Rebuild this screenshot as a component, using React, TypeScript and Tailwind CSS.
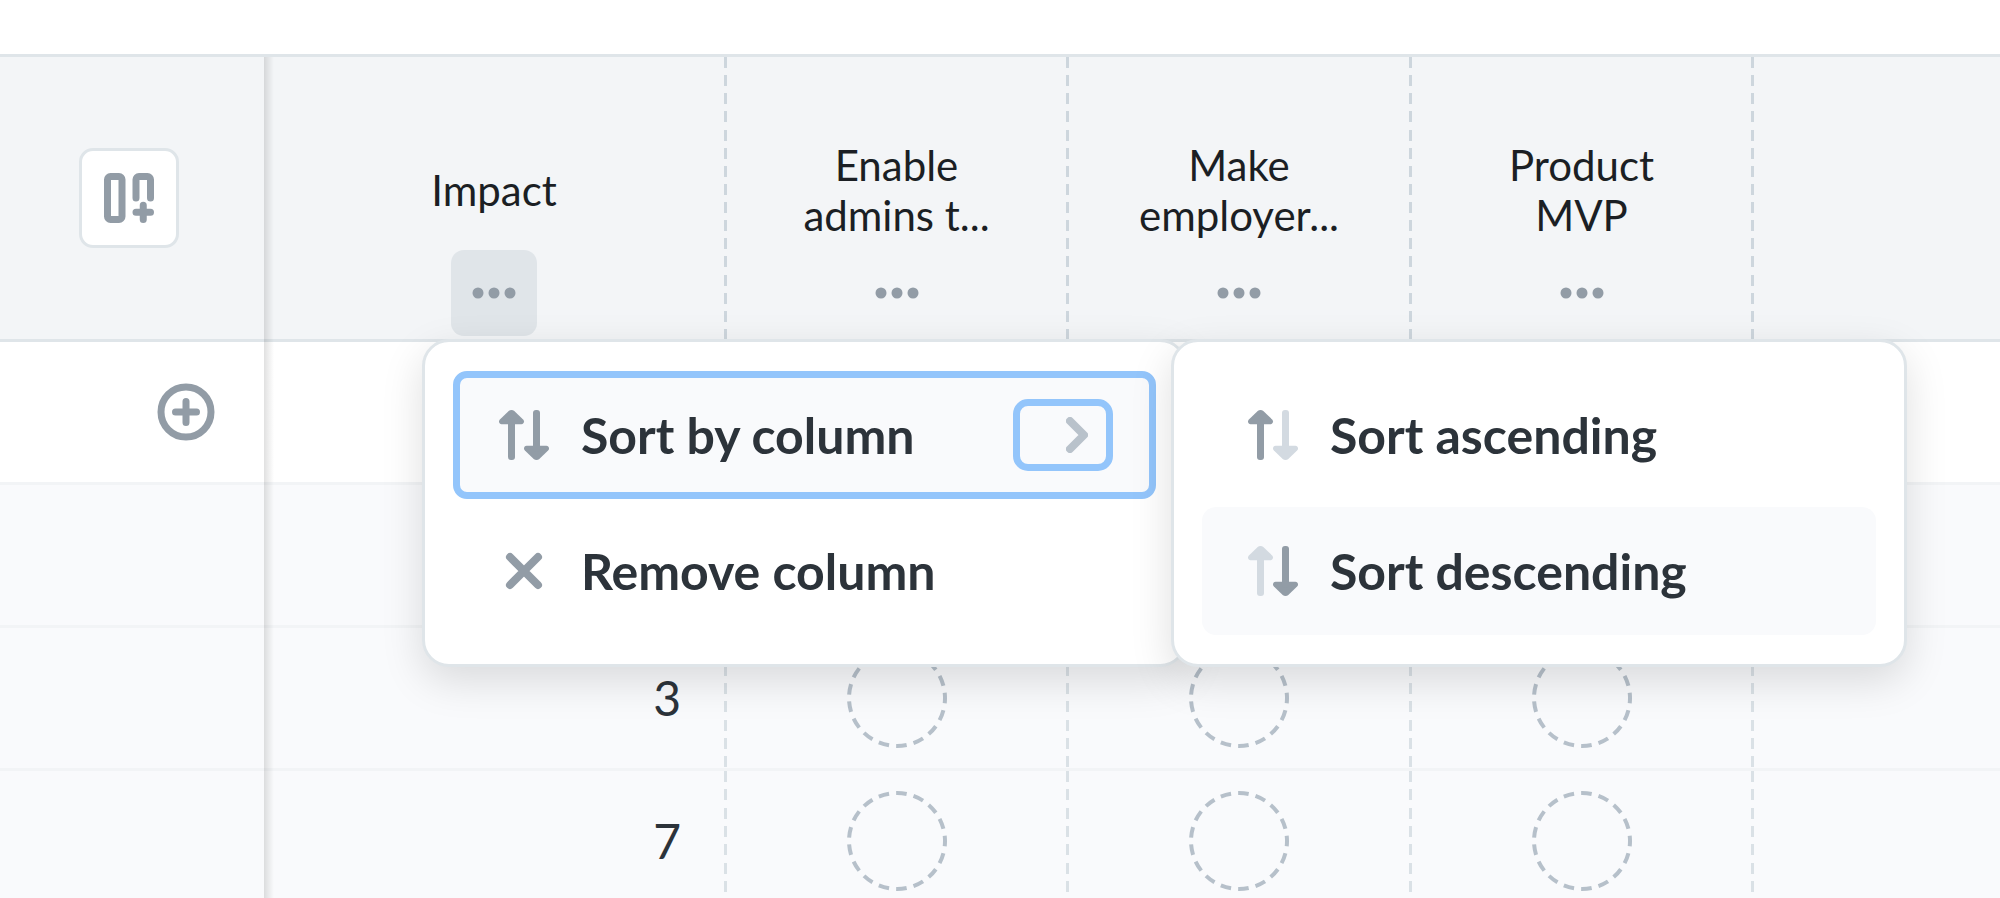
import React, { useState } from "react";
import clsx from "clsx";

interface Column {
  id: string;
  title: string[];
}

interface Row {
  id: string;
  impact: string;
  links: boolean;
}

const COLUMNS: Column[] = [
  { id: "admins", title: ["Enable", "admins t..."] },
  { id: "employer", title: ["Make", "employer..."] },
  { id: "mvp", title: ["Product", "MVP"] },
];

const ROWS: Row[] = [
  { id: "add", impact: "", links: false },
  { id: "r1", impact: "", links: true },
  { id: "r2", impact: "3", links: true },
  { id: "r3", impact: "7", links: true },
];

// Dashed column dividers, drawn as a 3px strip on the right edge of a cell
const HEAD_DASH =
  "bg-[repeating-linear-gradient(to_bottom,#cdd6dd_0_3.9%,transparent_3.9%_6.43%)] bg-[length:3px_100%] bg-right bg-no-repeat";
const BODY_DASH =
  "bg-[repeating-linear-gradient(to_bottom,#dae1e6_0_7.9%,transparent_7.9%_13.1%)] bg-[length:3px_100%] bg-right bg-no-repeat";

function SortIcon({ up = true, down = true }: { up?: boolean; down?: boolean }) {
  return (
    <svg viewBox="0 0 50 50" className="size-[50px] shrink-0" aria-hidden="true">
      <g className={up ? "fill-[#929ca6]" : "fill-[#d3dae1]"}>
        <path d="M12.5 0c1 0 2 .4 2.8 1.1l8.8 8.3c1.8 1.8.8 4.8-1.7 4.8H2.6C.1 14.2-.9 11.2.9 9.4l8.8-8.3C10.5.4 11.5 0 12.5 0z" />
        <rect x="9" y="8" width="7" height="42" rx="3" />
      </g>
      <g className={down ? "fill-[#929ca6]" : "fill-[#d3dae1]"}>
        <path d="M37.5 50c-1 0-2-.4-2.8-1.1l-8.8-8.3c-1.8-1.8-.8-4.8 1.7-4.8h19.8c2.5 0 3.5 3 1.7 4.8l-8.8 8.3c-.8.7-1.8 1.1-2.8 1.1z" />
        <rect x="34" y="0" width="7" height="42" rx="3" />
      </g>
    </svg>
  );
}

function CloseIcon() {
  return (
    <svg viewBox="0 0 50 50" className="size-[50px] shrink-0" aria-hidden="true">
      <path d="M11 11l28 28M39 11L11 39" stroke="#929ca6" strokeWidth="8" strokeLinecap="round" />
    </svg>
  );
}

function AddColumnIcon() {
  return (
    <svg
      viewBox="0 0 50 50"
      className="size-[50px]"
      fill="none"
      stroke="#929ca6"
      strokeWidth="7"
      strokeLinecap="round"
      aria-hidden="true"
    >
      <rect x="3.5" y="3.5" width="14.5" height="43" rx="3" />
      <path d="M32 25V6.5a3 3 0 0 1 3-3h8.5a3 3 0 0 1 3 3V25" />
      <path d="M39.25 32.2v14.3M32 39.3h14.5" />
    </svg>
  );
}

function AddRowIcon() {
  return (
    <svg
      viewBox="0 0 58 58"
      className="size-[58px]"
      fill="none"
      stroke="#929ca6"
      strokeWidth="7"
      strokeLinecap="round"
      aria-hidden="true"
    >
      <circle cx="29" cy="29" r="25" />
      <path d="M29 18.5v21M18.5 29h21" />
    </svg>
  );
}

function DotsIcon() {
  return (
    <svg viewBox="0 0 44 12" className="h-3 w-11 fill-[#929ca6]" aria-hidden="true">
      <circle cx="6" cy="6" r="5.5" />
      <circle cx="22" cy="6" r="5.5" />
      <circle cx="38" cy="6" r="5.5" />
    </svg>
  );
}

function EmptyScore() {
  return (
    <svg viewBox="0 0 100 100" className="size-[100px]" fill="none" aria-hidden="true">
      <circle
        cx="50"
        cy="50"
        r="48"
        pathLength="170"
        stroke="#b6c0ca"
        strokeWidth="4"
        strokeDasharray="6 4"
        strokeDashoffset="3"
      />
    </svg>
  );
}

function ColumnHeading({ title, active, onToggle }: { title: string[]; active?: boolean; onToggle?: () => void }) {
  return (
    <div className="flex h-[282px] flex-col items-center justify-end gap-2.5 pr-[3px] pb-[3px]">
      <div className="flex h-[100px] flex-col justify-center text-center text-[42px] leading-[50px] font-normal text-[#1b1f24]">
        {title.map((line) => (
          <span key={line} className="block">
            {line}
          </span>
        ))}
      </div>
      <button
        type="button"
        onClick={onToggle}
        aria-label={`${title.join(" ")} options`}
        className={clsx(
          "flex size-[86px] cursor-pointer items-center justify-center rounded-[13px]",
          active && "bg-[#e0e5e9]"
        )}
      >
        <DotsIcon />
      </button>
    </div>
  );
}

function MenuItem({ icon, label, className }: { icon: React.ReactNode; label: string; className?: string }) {
  return (
    <button
      type="button"
      role="menuitem"
      className={clsx("flex h-32 w-full cursor-pointer items-center gap-8 rounded-[14px] px-[46px] text-left", className)}
    >
      {icon}
      <span className="whitespace-nowrap">{label}</span>
    </button>
  );
}

function ColumnMenu() {
  const panel =
    "flex flex-col gap-2 rounded-[27px] border-[3px] border-[#dfe5e9] bg-white px-7 py-[29px] shadow-[0_14px_42px_rgba(0,0,0,0.13)]";

  return (
    <div className="absolute top-full left-[158px] z-20 flex text-[50px] leading-[56px] font-bold text-[#2c333a]">
      <div role="menu" className={clsx(panel, "w-[765px]")}>
        <div className="flex h-32 items-center justify-between rounded-[14px] border-[7px] border-[#93c5fb] bg-[#f9fafc] pr-9">
          <button
            type="button"
            role="menuitem"
            aria-haspopup="menu"
            className="flex cursor-pointer items-center gap-8 pl-[39px] text-left"
          >
            <SortIcon />
            <span className="whitespace-nowrap">Sort by column</span>
          </button>
          <button
            type="button"
            aria-label="Open sort options"
            className="flex h-[72px] w-[100px] cursor-pointer items-center justify-end rounded-[15px] border-[7px] border-[#93c5fb] pr-[18px]"
          >
            <svg viewBox="0 0 22 36" className="h-9 w-[22px]" fill="none" aria-hidden="true">
              <path
                d="M4 4l14 14L4 32"
                stroke="#b9c2cb"
                strokeWidth="8"
                strokeLinecap="round"
                strokeLinejoin="round"
              />
            </svg>
          </button>
        </div>
        <MenuItem icon={<CloseIcon />} label="Remove column" />
      </div>

      <div role="menu" className={clsx(panel, "relative -ml-4 w-[736px]")}>
        <MenuItem icon={<SortIcon down={false} />} label="Sort ascending" />
        <MenuItem icon={<SortIcon up={false} />} label="Sort descending" className="bg-[#f9fafc]" />
      </div>
    </div>
  );
}

export default function App() {
  const [menuOpen, setMenuOpen] = useState(true);
  const headCell = "relative border-y-[3px] border-[#dfe5e9] bg-[#f3f5f7] p-0";

  return (
    <div className="h-screen overflow-hidden bg-white pt-[54px] font-['Lato','Liberation_Sans',sans-serif]">
      <div className="relative">
        <table className="w-full table-fixed border-separate border-spacing-0">
          <colgroup>
            <col className="w-[264px]" />
            <col className="w-[463px]" />
            <col className="w-[342px]" />
            <col className="w-[343px]" />
            <col className="w-[342px]" />
            <col />
          </colgroup>
          <thead>
            <tr>
              <th className={headCell}>
                <div className="flex justify-center pr-1.5">
                  <button
                    type="button"
                    aria-label="Add column"
                    className="flex size-[100px] cursor-pointer items-center justify-center rounded-[14px] border-[3px] border-[#dfe5e9] bg-white"
                  >
                    <AddColumnIcon />
                  </button>
                </div>
              </th>
              <th className={clsx(headCell, HEAD_DASH)}>
                <ColumnHeading title={["Impact"]} active={menuOpen} onToggle={() => setMenuOpen(!menuOpen)} />
                {menuOpen && <ColumnMenu />}
              </th>
              {COLUMNS.map((column) => (
                <th key={column.id} className={clsx(headCell, HEAD_DASH)}>
                  <ColumnHeading title={column.title} />
                </th>
              ))}
              <th className={headCell} />
            </tr>
          </thead>
          <tbody className="text-[48px] leading-[56px] text-[#2c333a]">
            {ROWS.map((row, index) => {
              const cell = clsx("h-[143px] border-b-[3px] border-[#f2f4f6] p-0", index === 0 ? "bg-white" : "bg-[#f9fafc]");
              return (
                <tr key={row.id}>
                  <td className={cell}>
                    {index === 0 && (
                      <div className="flex justify-end pr-[49px]">
                        <button type="button" aria-label="Add row" className="cursor-pointer">
                          <AddRowIcon />
                        </button>
                      </div>
                    )}
                  </td>
                  <td className={clsx(cell, BODY_DASH, "text-right")}>
                    <span className="pr-[46px]">{row.impact}</span>
                  </td>
                  {COLUMNS.map((column) => (
                    <td key={column.id} className={clsx(cell, BODY_DASH)}>
                      {row.links && (
                        <div className="flex justify-center pr-[3px]">
                          <EmptyScore />
                        </div>
                      )}
                    </td>
                  ))}
                  <td className={cell} />
                </tr>
              );
            })}
          </tbody>
        </table>

        {/* Edge shadow of the frozen first column */}
        <div className="pointer-events-none absolute top-[3px] bottom-0 left-[264px] w-2.5 bg-linear-to-r from-black/12 to-transparent" />
      </div>
    </div>
  );
}
